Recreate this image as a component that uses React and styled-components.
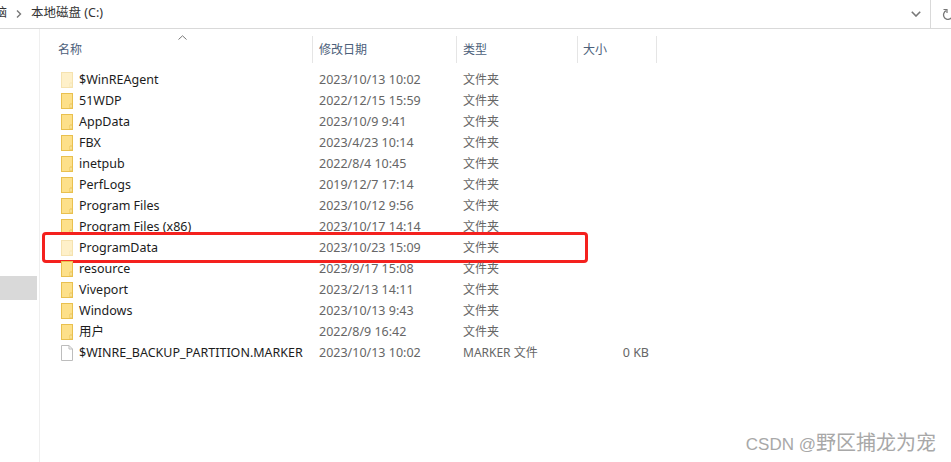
import React from 'react';
import styled, { createGlobalStyle } from 'styled-components';

const GlobalStyle = createGlobalStyle`
html, body {
    margin: 0;
    padding: 0;
    background: #fff;
    overflow: hidden;
}
`;
const Window = styled.div`
position: relative;
width: 951px;
height: 462px;
display: flex;
flex-direction: column;
overflow: hidden;
background: #fff;
font-family: "Noto Sans", "Noto Sans CJK SC", sans-serif;
font-size: 12.5px;
color: #1a1a1a;
`;
const AddressBar = styled.div`
box-sizing: border-box;
height: 29px;
flex: none;
display: flex;
align-items: center;
border-bottom: 1px solid #d9d9d9;
`;
const Crumb = styled.span`
color: #333;
line-height: 26px;
margin-bottom: 2px;
white-space: nowrap;
`;
const CutCrumb = styled(Crumb)`
display: block;
width: 7px;
overflow: hidden;
direction: rtl;
`;
const CrumbArrow = styled.svg`
width: 6px;
height: 8px;
margin: 0 9px 0 9px;
`;
const DropButton = styled.svg`
width: 10px;
height: 6px;
margin-left: auto;
margin-right: 9px;
`;
const AddressDivider = styled.div`
width: 1px;
height: 28px;
background: #d9d9d9;
margin-right: 11px;
`;
const RefreshClip = styled.div`
width: 9px;
height: 12px;
overflow: hidden;
`;
const Body = styled.div`
flex: 1;
display: flex;
min-height: 0;
`;
const Sidebar = styled.div`
box-sizing: border-box;
width: 40px;
flex: none;
border-right: 1px solid #efefef;
padding-top: 247px;
`;
const SideSelected = styled.div`
width: 37px;
height: 24px;
background: #d9d9d9;
`;
const Main = styled.div`
flex: 1;
padding: 7px 0 0 18px;
`;
const Header = styled.div`
position: relative;
display: grid;
grid-template-columns: 255px 144px 121px 79px;
height: 27px;
`;
const SortCaret = styled.svg`
position: absolute;
left: 120px;
top: -1px;
width: 9px;
height: 5px;
`;
const HeaderCell = styled.div`
box-sizing: border-box;
height: 27px;
line-height: 28px;
font-size: 12px;
padding-left: ${({ $pad }) => $pad}px;
border-right: 1px solid #e5e5e5;
color: #4c607a;
`;
const List = styled.div`
padding-top: 6px;
`;
const Row = styled.div`
position: relative;
display: grid;
grid-template-columns: 255px 143px 121px 72px;
height: 21px;
line-height: 21px;
`;
const NameCell = styled.div`
display: flex;
align-items: center;
gap: 5px;
padding-left: 2px;
white-space: nowrap;
color: #1c1c1c;
`;
const DateCell = styled.div`
padding-left: 6px;
color: #666;
white-space: nowrap;
`;
const TypeCell = styled.div`
padding-left: 7px;
font-size: 12px;
color: #666;
white-space: nowrap;
`;
const SizeCell = styled.div`
text-align: right;
color: #666;
white-space: nowrap;
`;
const Highlight = styled.div`
position: absolute;
left: -16px;
top: -5px;
width: 546px;
height: 31px;
box-sizing: border-box;
border: 3px solid #f4211e;
border-radius: 4px;
pointer-events: none;
`;
const Watermark = styled.div`
position: absolute;
right: 15px;
top: 430px;
font-size: 20px;
line-height: 26px;
color: #a8a8a8;
white-space: nowrap;
font-family: "Liberation Sans", "Noto Sans CJK SC", sans-serif;
`;
const WatermarkLatin = styled.span`
font-size: 17px;
`;
const IconSvg = styled.svg`
width: 14px;
height: 16px;
flex: none;
opacity: ${({ $faded }) => ($faded ? 0.45 : 1)};
`;

const FolderIcon = ({ faded }) => (
    <IconSvg viewBox="0 0 14 16" $faded={faded}>
        <rect x="1.5" y="0.5" width="11" height="15" fill="#fde08a" stroke="#e9c04f" />
        <path d="M12 15 V11 H10 V15 Z" fill="#fff3c4" stroke="#e9c04f" strokeWidth="0.8" />
    </IconSvg>
);

const FileIcon = () => (
    <IconSvg viewBox="0 0 14 16">
        <path d="M1.5 0.5 H9 L12.5 4 V15.5 H1.5 Z" fill="#fff" stroke="#bdbdbd" />
        <path d="M9 0.5 V4 H12.5" fill="none" stroke="#bdbdbd" />
    </IconSvg>
);

const rows = [
    { name: '$WinREAgent', date: '2023/10/13 10:02', type: '文件夹', faded: true },
    { name: '51WDP', date: '2022/12/15 15:59', type: '文件夹' },
    { name: 'AppData', date: '2023/10/9 9:41', type: '文件夹' },
    { name: 'FBX', date: '2023/4/23 10:14', type: '文件夹' },
    { name: 'inetpub', date: '2022/8/4 10:45', type: '文件夹' },
    { name: 'PerfLogs', date: '2019/12/7 17:14', type: '文件夹' },
    { name: 'Program Files', date: '2023/10/12 9:56', type: '文件夹' },
    { name: 'Program Files (x86)', date: '2023/10/17 14:14', type: '文件夹' },
    { name: 'ProgramData', date: '2023/10/23 15:09', type: '文件夹', faded: true, marked: true },
    { name: 'resource', date: '2023/9/17 15:08', type: '文件夹' },
    { name: 'Viveport', date: '2023/2/13 14:11', type: '文件夹' },
    { name: 'Windows', date: '2023/10/13 9:43', type: '文件夹' },
    { name: '用户', date: '2022/8/9 16:42', type: '文件夹' },
    { name: '$WINRE_BACKUP_PARTITION.MARKER', date: '2023/10/13 10:02', type: 'MARKER 文件', size: '0 KB', file: true },
];

const App = () => {
    return (
        <Window>
            <GlobalStyle />
            <AddressBar>
                <CutCrumb>脑</CutCrumb>
                <CrumbArrow viewBox="0 0 6 8">
                    <path d="M1 0.5 L4.5 4 L1 7.5" fill="none" stroke="#777" strokeWidth="1.4" />
                </CrumbArrow>
                <Crumb>本地磁盘 (C:)</Crumb>
                <DropButton viewBox="0 0 10 6">
                    <path d="M0.8 0.8 L5 5 L9.2 0.8" fill="none" stroke="#777" strokeWidth="1.6" />
                </DropButton>
                <AddressDivider />
                <RefreshClip>
                    <svg width="12" height="12" viewBox="0 0 12 12">
                        <path d="M3 2.5 A4.5 4.5 0 1 0 9 2.5" transform="rotate(20 6 6)" fill="none" stroke="#777" strokeWidth="1.3" />
                        <path d="M1.5 0.5 H5 V4" fill="none" stroke="#777" strokeWidth="1.2" />
                    </svg>
                </RefreshClip>
            </AddressBar>
            <Body>
                <Sidebar>
                    <SideSelected />
                </Sidebar>
                <Main>
                    <Header>
                        <SortCaret viewBox="0 0 9 5">
                            <path d="M0.5 4.5 L4.5 0.8 L8.5 4.5" fill="none" stroke="#777" />
                        </SortCaret>
                        <HeaderCell $pad={0}>名称</HeaderCell>
                        <HeaderCell $pad={6}>修改日期</HeaderCell>
                        <HeaderCell $pad={6}>类型</HeaderCell>
                        <HeaderCell $pad={5}>大小</HeaderCell>
                    </Header>
                    <List>
                        {rows.map((row) => (
                            <Row key={row.name}>
                                <NameCell>
                                    {row.file ? <FileIcon /> : <FolderIcon faded={row.faded} />}
                                    {row.name}
                                </NameCell>
                                <DateCell>{row.date}</DateCell>
                                <TypeCell>{row.type}</TypeCell>
                                <SizeCell>{row.size}</SizeCell>
                                {row.marked && <Highlight />}
                            </Row>
                        ))}
                    </List>
                </Main>
            </Body>
            <Watermark><WatermarkLatin>CSDN @</WatermarkLatin>野区捕龙为宠</Watermark>
        </Window>
    );
};

export default App;
